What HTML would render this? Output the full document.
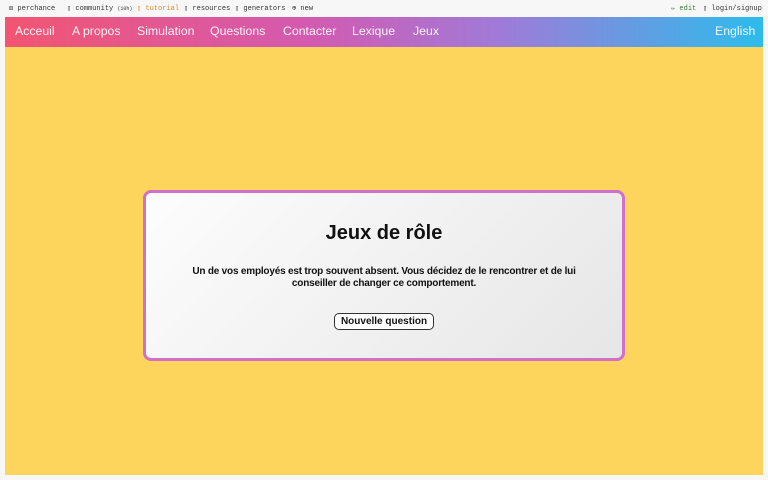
<!DOCTYPE html>
<html><head><meta charset="utf-8"><style>
*{box-sizing:border-box;margin:0;padding:0}
body{width:768px;height:480px;background:#f7f7f7;font-family:"Liberation Sans",sans-serif;position:relative;overflow:hidden}
.top{position:absolute;top:0;left:0;width:768px;height:17px;font-family:"Liberation Mono",monospace;font-size:7px;color:#333}
.top span{position:absolute;top:4px;white-space:nowrap}
.nav{position:absolute;left:5px;top:17px;width:758px;height:30px;background:linear-gradient(90deg,#f25572 0%,#d35ab0 40%,#a07ad8 65%,#2cbcec 100%)}
.nav a{position:absolute;top:7px;color:#fff;font-size:12.3px;text-decoration:none;opacity:.92}
.main{position:absolute;left:5px;top:47px;width:758px;height:428px;background:#fed55c}
.card{position:absolute;left:143px;top:190px;width:482px;height:171px;border:3px solid #d070c8;border-radius:8px;background:linear-gradient(135deg,#fdfdfd,#e6e6e6);text-align:center}
h1{font-size:20px;margin-top:29px;color:#111}
p{font-size:10px;font-weight:bold;width:392px;margin:21px auto 0;line-height:12px;color:#111;letter-spacing:-0.2px}
button{margin-top:23px;font-family:"Liberation Sans",sans-serif;font-size:10px;font-weight:bold;border:1.5px solid #333;border-radius:5px;background:#fff;padding:2px 6px;color:#111}
</style></head><body>
<div class="top">
<span style="left:9px">⚄ perchance</span>
<span style="left:67px">▯ community <small style="font-size:5px">(10h)</small></span>
<span style="left:137px;color:#e08a2c">▯ tutorial</span>
<span style="left:184px">▯ resources</span>
<span style="left:235px">▯ generators</span>
<span style="left:292px">⊕ new</span>
<span style="left:671px;color:#3a7a3a">✏ edit</span>
<span style="left:703px">▯ login/signup</span>
</div>
<div class="nav">
<a style="left:10px">Acceuil</a><a style="left:67px">A propos</a><a style="left:132px">Simulation</a><a style="left:205px">Questions</a><a style="left:278px">Contacter</a><a style="left:347px">Lexique</a><a style="left:408px">Jeux</a><a style="left:710px">English</a>
</div>
<div class="main"></div>
<div class="card">
<h1>Jeux de rôle</h1>
<p>Un de vos employés est trop souvent absent. Vous décidez de le rencontrer et de lui conseiller de changer ce comportement.</p>
<button>Nouvelle question</button>
</div>
</body></html>
